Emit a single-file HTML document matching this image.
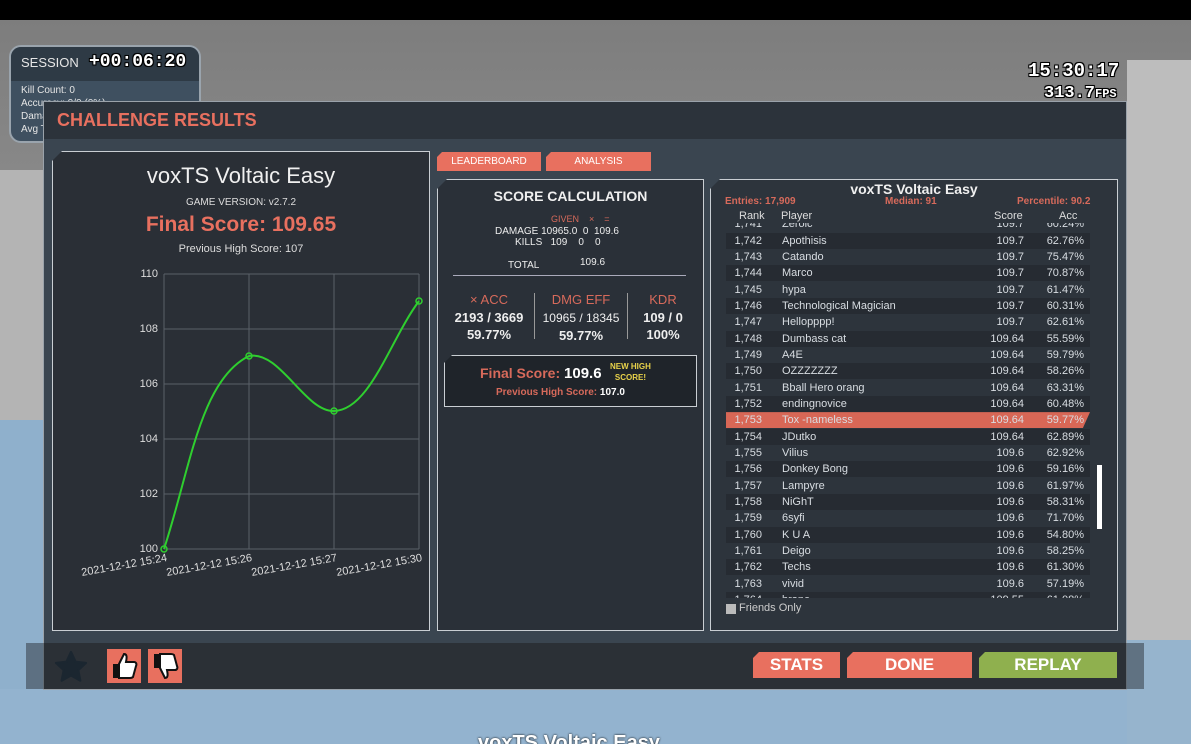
<!DOCTYPE html>
<html><head><meta charset="utf-8"><style>
*{margin:0;padding:0;box-sizing:border-box}
html,body{width:1191px;height:744px;overflow:hidden}
body{position:relative;font-family:"Liberation Sans",sans-serif;background:#8b8b8b}
.abs{position:absolute}
.t{position:absolute;white-space:nowrap}
.mono{font-family:"Liberation Mono",monospace;font-weight:bold;color:#fff;text-shadow:0 0 2px #000,1px 1px 0 #000,-1px -1px 0 #000,1px -1px 0 #000,-1px 1px 0 #000}
.row{position:absolute;left:726px;width:364px;height:16.33px;font-size:11px;color:#d8dde2}
.row span{position:absolute;top:2px}
.r1{right:328px}.r2{left:56px}.r3{right:66px}.r4{right:6px}
.btn{position:absolute;color:#fff;font-weight:bold;font-size:17px;text-align:center;line-height:26px;clip-path:polygon(6px 0,100% 0,100% 100%,0 100%,0 6px)}
</style></head><body>
<div class="abs" style="left:0;top:0;width:1191px;height:20px;background:#000"></div>
<div class="abs" style="left:0;top:20px;width:1191px;height:400px;background:linear-gradient(180deg,#7d7d7d,#9a9a9a)"></div>
<div class="abs" style="left:0;top:170px;width:45px;height:260px;background:#b4b4b4"></div>
<div class="abs" style="left:1127px;top:60px;width:64px;height:620px;background:#bdbdbd"></div>
<div class="abs" style="left:0;top:420px;width:45px;height:324px;background:#8fb0cc"></div>
<div class="abs" style="left:0;top:689px;width:1191px;height:55px;background:#93b3cf"></div>
<div class="abs" style="left:1127px;top:640px;width:64px;height:104px;background:#96b4cd"></div>
<div class="t" style="left:478px;top:732px;font-size:20px;font-weight:bold;color:#fff;text-shadow:0 0 2px #000">voxTS Voltaic Easy</div>
<div class="abs" style="left:9px;top:45px;width:192px;height:98px;border-radius:12px;background:#3f5060;border:2px solid #9aa4ad"></div>
<div class="abs" style="left:11px;top:47px;width:188px;height:34px;border-radius:10px 10px 0 0;background:#2e3a45"></div>
<div class="t" style="left:21px;top:55px;font-size:13px;color:#e6e6e6">SESSION</div>
<div class="t mono" style="left:89px;top:52px;font-size:18px">+00:06:20</div>
<div class="t" style="left:21px;top:84px;font-size:10px;color:#e6e6e6;line-height:13px">Kill Count: 0<br>Accuracy: 0/0 (0%)<br>Damage<br>Avg TTK</div>
<div class="t mono" style="left:1028px;top:60px;font-size:19px">15:30:17</div>
<div class="t mono" style="left:1044px;top:84px;font-size:17px">313.7<span style="font-size:12px">FPS</span></div>
<div class="abs" style="left:43px;top:101px;width:1084px;height:589px;background:#3a4550;border:1px solid #9aa2aa"></div>
<div class="abs" style="left:44px;top:102px;width:1082px;height:37px;background:#2c333b"></div>
<div class="t" style="left:57px;top:110px;font-size:18px;font-weight:bold;color:#e8705f">CHALLENGE RESULTS</div>
<div class="abs" style="left:26px;top:643px;width:1118px;height:46px;background:rgba(60,70,80,.6)"></div>
<div class="abs" style="left:44px;top:643px;width:1082px;height:46px;background:#2b3036"></div>
<div class="abs" style="left:52px;top:151px;width:378px;height:480px;background:#2a2f36;border:1px solid #c9ced3;clip-path:polygon(10px 0,100% 0,100% 100%,0 100%,0 10px)"></div>
<div class="t" style="left:52px;width:378px;text-align:center;top:163px;font-size:22px;color:#f0f0f0">voxTS Voltaic Easy</div>
<div class="t" style="left:52px;width:378px;text-align:center;top:197px;font-size:10px;color:#ddd">GAME VERSION: v2.7.2</div>
<div class="t" style="left:52px;width:378px;text-align:center;top:213px;font-size:21px;font-weight:bold;color:#e8705f">Final Score: 109.65</div>
<div class="t" style="left:52px;width:378px;text-align:center;top:243px;font-size:11px;color:#ddd">Previous High Score: 107</div>
<svg class="abs" style="left:52px;top:151px" width="378" height="480" viewBox="52 151 378 480">
<g stroke="#5a6068" stroke-width="1">
<line x1="164" y1="274" x2="419" y2="274"/><line x1="164" y1="329" x2="419" y2="329"/><line x1="164" y1="384" x2="419" y2="384"/><line x1="164" y1="439" x2="419" y2="439"/><line x1="164" y1="494" x2="419" y2="494"/><line x1="164" y1="549" x2="419" y2="549"/>
<line x1="164" y1="274" x2="164" y2="549"/><line x1="249" y1="274" x2="249" y2="549"/><line x1="334" y1="274" x2="334" y2="549"/><line x1="419" y1="274" x2="419" y2="549"/>
</g>
<g fill="#ddd" font-size="11" font-family="Liberation Sans" text-anchor="end">
<text x="158" y="277">110</text><text x="158" y="332">108</text><text x="158" y="387">106</text><text x="158" y="442">104</text><text x="158" y="497">102</text><text x="158" y="552">100</text>
</g>
<path d="M164 549 C190 470 200 380 249 356 C280 350 305 412 334 411 C370 410 390 340 419 301" fill="none" stroke="#2fcf2f" stroke-width="2"/>
<g fill="none" stroke="#2fcf2f" stroke-width="1.5"><circle cx="164" cy="549" r="3"/><circle cx="249" cy="356" r="3"/><circle cx="334" cy="411" r="3"/><circle cx="419" cy="301" r="3"/></g>
<g fill="#ddd" font-size="11" font-family="Liberation Sans">
<text x="82" y="576" transform="rotate(-10 82 576)">2021-12-12 15:24</text>
<text x="167" y="576" transform="rotate(-10 167 576)">2021-12-12 15:26</text>
<text x="252" y="576" transform="rotate(-10 252 576)">2021-12-12 15:27</text>
<text x="337" y="576" transform="rotate(-10 337 576)">2021-12-12 15:30</text>
</g>
</svg>
<div class="abs" style="left:437px;top:152px;width:104px;height:19px;background:#e8705f;clip-path:polygon(5px 0,100% 0,100% 100%,0 100%,0 5px)"></div>
<div class="t" style="left:437px;width:104px;text-align:center;top:156px;font-size:10px;color:#fff">LEADERBOARD</div>
<div class="abs" style="left:546px;top:152px;width:105px;height:19px;background:#e8705f;clip-path:polygon(5px 0,100% 0,100% 100%,0 100%,0 5px)"></div>
<div class="t" style="left:546px;width:105px;text-align:center;top:156px;font-size:10px;color:#fff">ANALYSIS</div>
<div class="abs" style="left:437px;top:179px;width:267px;height:452px;background:#2a3038;border:1px solid #c9ced3;clip-path:polygon(10px 0,100% 0,100% 100%,0 100%,0 10px)"></div>
<div class="t" style="left:437px;width:267px;text-align:center;top:188px;font-size:14px;font-weight:bold;color:#f0f0f0">SCORE CALCULATION</div>
<div class="t" style="left:551px;top:214px;font-size:9px;color:#d76a5b">GIVEN &nbsp;&nbsp;&nbsp;× &nbsp;&nbsp;&nbsp;=</div>
<div class="t" style="left:495px;top:226px;font-size:10px;color:#eee">DAMAGE 10965.0&nbsp; 0&nbsp; 109.6</div>
<div class="t" style="left:515px;top:237px;font-size:10px;color:#eee">KILLS &nbsp;&nbsp;109 &nbsp;&nbsp;&nbsp;0 &nbsp;&nbsp;&nbsp;0</div>
<div class="t" style="left:508px;top:260px;font-size:10px;color:#eee">TOTAL</div>
<div class="t" style="left:580px;top:257px;font-size:10px;color:#eee">109.6</div>
<div class="abs" style="left:453px;top:275px;width:233px;height:1px;background:#aab"></div>
<div class="abs" style="left:534px;top:293px;width:1px;height:46px;background:#999"></div>
<div class="abs" style="left:627px;top:293px;width:1px;height:46px;background:#999"></div>
<div class="t" style="left:445px;width:88px;text-align:center;top:292px;font-size:13px;color:#d76a5b">× ACC</div>
<div class="t" style="left:445px;width:88px;text-align:center;top:309px;font-size:13px;font-weight:bold;color:#eee;line-height:17px">2193 / 3669<br>59.77%</div>
<div class="t" style="left:535px;width:92px;text-align:center;top:292px;font-size:13px;color:#d76a5b">DMG EFF</div>
<div class="t" style="left:535px;width:92px;text-align:center;top:310px;font-size:12px;color:#eee;line-height:17px">10965 / 18345<br><b style="font-size:13px">59.77%</b></div>
<div class="t" style="left:628px;width:70px;text-align:center;top:292px;font-size:13px;color:#d76a5b">KDR</div>
<div class="t" style="left:628px;width:70px;text-align:center;top:309px;font-size:13px;font-weight:bold;color:#eee;line-height:17px">109 / 0<br>100%</div>
<div class="abs" style="left:444px;top:355px;width:253px;height:52px;background:#1f242a;border:1px solid #c9ced3;clip-path:polygon(8px 0,100% 0,100% 100%,0 100%,0 8px)"></div>
<div class="t" style="left:480px;top:365px;font-size:14px;font-weight:bold;color:#d76a5b">Final Score: <span style="color:#fff;font-size:15px">109.6</span></div>
<div class="t" style="left:610px;top:361px;font-size:8px;font-weight:bold;color:#e8d24a;text-align:center;line-height:11px">NEW HIGH<br>SCORE!</div>
<div class="t" style="left:496px;top:387px;font-size:10px;font-weight:bold;color:#d76a5b">Previous High Score: <span style="color:#fff">107.0</span></div>
<div class="abs" style="left:710px;top:179px;width:408px;height:452px;background:#2d343c;border:1px solid #c9ced3;clip-path:polygon(10px 0,100% 0,100% 100%,0 100%,0 10px)"></div>
<div class="t" style="left:710px;width:408px;text-align:center;top:181px;font-size:14px;font-weight:bold;color:#f0f0f0">voxTS Voltaic Easy</div>
<div class="t" style="left:725px;top:196px;font-size:10px;font-weight:bold;color:#d76a5b">Entries: 17,909</div>
<div class="t" style="left:885px;top:196px;font-size:10px;font-weight:bold;color:#d76a5b">Median: 91</div>
<div class="t" style="left:1017px;top:196px;font-size:10px;font-weight:bold;color:#d76a5b">Percentile: 90.2</div>
<div class="abs" style="left:726px;top:222px;width:364px;height:376px;overflow:hidden">
<div style="position:absolute;left:-726px;top:-222px;width:1191px;height:700px">
<div class="row" style="top:216px"><span class="r1">1,741</span><span class="r2">Zeroic</span><span class="r3">109.7</span><span class="r4">60.24%</span></div>
<div class="row" style="top:232.5px;background:#262b32"><span class="r1">1,742</span><span class="r2">Apothisis</span><span class="r3">109.7</span><span class="r4">62.76%</span></div>
<div class="row" style="top:248.8px"><span class="r1">1,743</span><span class="r2">Catando</span><span class="r3">109.7</span><span class="r4">75.47%</span></div>
<div class="row" style="top:265.1px;background:#262b32"><span class="r1">1,744</span><span class="r2">Marco</span><span class="r3">109.7</span><span class="r4">70.87%</span></div>
<div class="row" style="top:281.5px"><span class="r1">1,745</span><span class="r2">hypa</span><span class="r3">109.7</span><span class="r4">61.47%</span></div>
<div class="row" style="top:297.8px;background:#262b32"><span class="r1">1,746</span><span class="r2">Technological Magician</span><span class="r3">109.7</span><span class="r4">60.31%</span></div>
<div class="row" style="top:314.1px"><span class="r1">1,747</span><span class="r2">Hellopppp!</span><span class="r3">109.7</span><span class="r4">62.61%</span></div>
<div class="row" style="top:330.5px;background:#262b32"><span class="r1">1,748</span><span class="r2">Dumbass cat</span><span class="r3">109.64</span><span class="r4">55.59%</span></div>
<div class="row" style="top:346.8px"><span class="r1">1,749</span><span class="r2">A4E</span><span class="r3">109.64</span><span class="r4">59.79%</span></div>
<div class="row" style="top:363.1px;background:#262b32"><span class="r1">1,750</span><span class="r2">OZZZZZZZ</span><span class="r3">109.64</span><span class="r4">58.26%</span></div>
<div class="row" style="top:379.5px"><span class="r1">1,751</span><span class="r2">Bball Hero orang</span><span class="r3">109.64</span><span class="r4">63.31%</span></div>
<div class="row" style="top:395.8px;background:#262b32"><span class="r1">1,752</span><span class="r2">endingnovice</span><span class="r3">109.64</span><span class="r4">60.48%</span></div>
<div class="row" style="top:412.1px;background:#d86756;clip-path:polygon(0 0,100% 0,98% 100%,0 100%)"><span class="r1">1,753</span><span class="r2">Tox -nameless</span><span class="r3">109.64</span><span class="r4">59.77%</span></div>
<div class="row" style="top:428.5px;background:#262b32"><span class="r1">1,754</span><span class="r2">JDutko</span><span class="r3">109.64</span><span class="r4">62.89%</span></div>
<div class="row" style="top:444.8px"><span class="r1">1,755</span><span class="r2">Vilius</span><span class="r3">109.6</span><span class="r4">62.92%</span></div>
<div class="row" style="top:461.1px;background:#262b32"><span class="r1">1,756</span><span class="r2">Donkey Bong</span><span class="r3">109.6</span><span class="r4">59.16%</span></div>
<div class="row" style="top:477.5px"><span class="r1">1,757</span><span class="r2">Lampyre</span><span class="r3">109.6</span><span class="r4">61.97%</span></div>
<div class="row" style="top:493.8px;background:#262b32"><span class="r1">1,758</span><span class="r2">NiGhT</span><span class="r3">109.6</span><span class="r4">58.31%</span></div>
<div class="row" style="top:510.1px"><span class="r1">1,759</span><span class="r2">6syfi</span><span class="r3">109.6</span><span class="r4">71.70%</span></div>
<div class="row" style="top:526.5px;background:#262b32"><span class="r1">1,760</span><span class="r2">K U A</span><span class="r3">109.6</span><span class="r4">54.80%</span></div>
<div class="row" style="top:542.8px"><span class="r1">1,761</span><span class="r2">Deigo</span><span class="r3">109.6</span><span class="r4">58.25%</span></div>
<div class="row" style="top:559.1px;background:#262b32"><span class="r1">1,762</span><span class="r2">Techs</span><span class="r3">109.6</span><span class="r4">61.30%</span></div>
<div class="row" style="top:575.5px"><span class="r1">1,763</span><span class="r2">vivid</span><span class="r3">109.6</span><span class="r4">57.19%</span></div>
<div class="row" style="top:591.8px;background:#262b32"><span class="r1">1,764</span><span class="r2">brane</span><span class="r3">109.55</span><span class="r4">61.08%</span></div>
</div></div>
<div class="abs" style="left:726px;top:208px;width:364px;height:15px;background:#2d343c"></div>
<div class="t" style="left:739px;top:210px;font-size:11px;color:#ddd">Rank</div>
<div class="t" style="left:781px;top:210px;font-size:11px;color:#ddd">Player</div>
<div class="t" style="left:994px;top:210px;font-size:11px;color:#ddd">Score</div>
<div class="t" style="left:1059px;top:210px;font-size:11px;color:#ddd">Acc</div>
<div class="abs" style="left:1097px;top:465px;width:5px;height:64px;background:#fff"></div>
<div class="abs" style="left:726px;top:604px;width:10px;height:10px;background:#bbb"></div>
<div class="t" style="left:739px;top:602px;font-size:11px;color:#ccc">Friends Only</div>
<svg class="abs" style="left:52px;top:649px" width="38" height="36" viewBox="0 0 24 24"><path d="M12 2l3 6.5 7 .8-5.2 4.8 1.4 7L12 17.6 5.8 21.1l1.4-7L2 9.3l7-.8z" fill="#1b2630" stroke="#1b2630" stroke-linejoin="round" stroke-width="1.5"/></svg>
<div class="abs" style="left:107px;top:649px;width:34px;height:34px;background:#e8705f"></div>
<div class="abs" style="left:148px;top:649px;width:34px;height:34px;background:#e8705f"></div>
<svg class="abs" style="left:109px;top:651px" width="30" height="30" viewBox="0 0 30 30"><path d="M4 13h6v14H4z" fill="#111"/><path d="M10 13l5-10c3 0 3 3 2 8h8c2 0 3 2 2 4l-3 11c-1 1-2 1-3 1H10z" fill="#fff" stroke="#111" stroke-width="2"/></svg>
<svg class="abs" style="left:150px;top:651px" width="30" height="30" viewBox="0 0 30 30"><path d="M4 3h6v14H4z" fill="#111"/><path d="M10 17l5 10c3 0 3-3 2-8h8c2 0 3-2 2-4L24 4c-1-1-2-1-3-1H10z" fill="#fff" stroke="#111" stroke-width="2"/></svg>
<div class="btn" style="left:753px;top:652px;width:87px;background:#e8705f">STATS</div>
<div class="btn" style="left:847px;top:652px;width:125px;background:#e8705f">DONE</div>
<div class="btn" style="left:979px;top:652px;width:138px;background:#8fb04e">REPLAY</div>
</body></html>
